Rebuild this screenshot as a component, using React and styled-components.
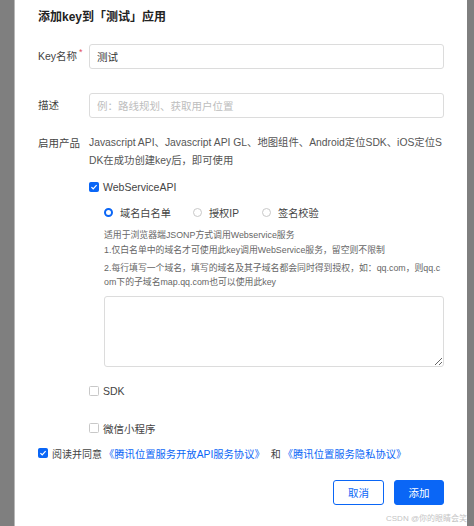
import React from 'react';
import styled, { createGlobalStyle } from 'styled-components';

const GlobalStyle = createGlobalStyle`
  html, body {
    margin: 0;
    padding: 0;
    background: #7f7f7f;
  }
  body {
    font-family: "Liberation Sans", "Noto Sans CJK SC", sans-serif;
  }
`;

const BLUE = '#0a66f6';

const Page = styled.div`
  display: flex;
  height: 526px;
  padding: 0 7px 0 14px;
  box-sizing: border-box;
`;

const Modal = styled.div`
  position: relative;
  flex: 1;
  background: #fff;
  border-left: 1px solid #b8b8b8;
  padding: 7px 23px 0 23px;
  box-sizing: border-box;
  overflow: hidden;
`;

const Title = styled.div`
  font-size: 12px;
  font-weight: bold;
  line-height: 20px;
  color: #222;
  margin-bottom: 17px;
`;

const Row = styled.div`
  display: flex;
  align-items: ${p => (p.$top ? 'flex-start' : 'center')};
  margin-top: ${p => p.$mt || 0}px;
`;

const Label = styled.div`
  width: 51px;
  flex-shrink: 0;
  font-size: 10.5px;
  color: #444;
  line-height: ${p => (p.$top ? '18px' : '25px')};
  white-space: nowrap;
`;

const Star = styled.span`
  color: #e34d59;
  font-size: 9px;
  vertical-align: top;
  margin-left: 2px;
  position: relative;
  top: -4px;
`;

const Input = styled.input`
  flex: 1;
  height: 25px;
  box-sizing: border-box;
  border: 1px solid #dcdcdc;
  border-radius: 3px;
  padding: 0 7px;
  font-family: inherit;
  font-size: 10.5px;
  color: #333;
  outline: none;
  &::placeholder {
    color: #bdbdbd;
  }
`;

const Field = styled.div`
  flex: 1;
  min-width: 0;
`;

const Desc = styled.div`
  font-size: 10.35px;
  line-height: 18px;
  color: #555;
  word-break: break-all;
`;

const CheckRow = styled.label`
  display: flex;
  align-items: center;
  height: 20px;
  gap: 4px;
  margin-top: ${p => p.$mt || 0}px;
  font-size: 10.5px;
  color: #444;
`;

const Box = styled.span`
  width: 10px;
  height: 10px;
  box-sizing: border-box;
  border-radius: 1.5px;
  border: 1px solid ${p => (p.$on ? BLUE : '#c8c8c8')};
  background: ${p => (p.$on ? BLUE : '#fff')};
  display: inline-flex;
  align-items: center;
  justify-content: center;
  flex-shrink: 0;
`;

const RadioGroup = styled.div`
  display: flex;
  align-items: center;
  height: 20px;
  margin: 5px 0 0 15px;
`;

const Radio = styled.span`
  display: flex;
  align-items: center;
  gap: 7px;
  font-size: 10.2px;
  color: #444;
  margin-right: ${p => p.$mr || 0}px;
`;

const Dot = styled.span`
  width: 9px;
  height: 9px;
  box-sizing: border-box;
  border-radius: 50%;
  border: ${p => (p.$on ? `2.6px solid ${BLUE}` : '1px solid #c8c8c8')};
  background: #fff;
  flex-shrink: 0;
`;

const Help = styled.div`
  margin: 6px 0 0 15px;
  font-size: 8.85px;
  color: #666;
  word-break: break-all;
`;

const HelpLine = styled.div`
  line-height: ${p => p.$lh || 15}px;
  margin-top: ${p => p.$mt || 0}px;
`;

const Area = styled.textarea`
  display: block;
  margin: 7px 0 0 15px;
  width: calc(100% - 15px);
  height: 71px;
  box-sizing: border-box;
  border: 1px solid #dcdcdc;
  border-radius: 3px;
  resize: vertical;
  outline: none;
  font-family: inherit;
`;

const Agree = styled.div`
  display: flex;
  align-items: center;
  height: 20px;
  margin-top: 5px;
  font-size: 10px;
  color: #444;
  white-space: nowrap;
`;

const Link = styled.a`
  color: ${BLUE};
  font-size: 10.3px;
  text-decoration: none;
  margin: 0 ${p => p.$mr || 0}px 0 ${p => p.$ml || 0}px;
`;

const Footer = styled.div`
  display: flex;
  justify-content: flex-end;
  gap: 10px;
  margin-top: 17px;
`;

const Button = styled.button`
  width: ${p => p.$w}px;
  height: 25px;
  border-radius: 3px;
  font-family: inherit;
  font-size: 10.5px;
  border: 1px solid ${BLUE};
  background: ${p => (p.$primary ? BLUE : '#fff')};
  color: ${p => (p.$primary ? '#fff' : BLUE)};
  padding: 0;
`;

const Watermark = styled.div`
  position: absolute;
  right: 0;
  bottom: 3px;
  font-size: 8px;
  color: #c4c4c4;
  white-space: nowrap;
`;

const Tick = () => (
  <svg width="8" height="8" viewBox="0 0 8 8">
    <path d="M1.4 4.1 L3.2 5.8 L6.6 2.2" fill="none" stroke="#fff" strokeWidth="1.2" />
  </svg>
);

const Check = ({ on, children, ...rest }) => (
  <CheckRow {...rest}>
    <Box $on={on}>{on && <Tick />}</Box>
    {children}
  </CheckRow>
);

export default function App() {
  return (
    <>
      <GlobalStyle />
      <Page>
        <Modal>
          <Title>添加key到「测试」应用</Title>

          <Row>
            <Label>Key名称<Star>*</Star></Label>
            <Input defaultValue="测试" />
          </Row>

          <Row $mt={24}>
            <Label>描述</Label>
            <Input placeholder="例：路线规划、获取用户位置" />
          </Row>

          <Row $top $mt={16}>
            <Label $top>启用产品</Label>
            <Field>
              <Desc>Javascript API、Javascript API GL、地图组件、Android定位SDK、iOS定位SDK在成功创建key后，即可使用</Desc>

              <Check on $mt={7}>WebServiceAPI</Check>

              <RadioGroup>
                <Radio $mr={22}><Dot $on />域名白名单</Radio>
                <Radio $mr={23}><Dot />授权IP</Radio>
                <Radio><Dot />签名校验</Radio>
              </RadioGroup>

              <Help>
                <HelpLine>适用于浏览器端JSONP方式调用Webservice服务</HelpLine>
                <HelpLine>1.仅白名单中的域名才可使用此key调用WebService服务，留空则不限制</HelpLine>
                <HelpLine $lh={14} $mt={3}>2.每行填写一个域名，填写的域名及其子域名都会同时得到授权，如：qq.com，则qq.com下的子域名map.qq.com也可以使用此key</HelpLine>
              </Help>

              <Area />

              <Check $mt={14}>SDK</Check>
              <Check $mt={17}>微信小程序</Check>
            </Field>
          </Row>

          <Agree>
            <Box $on><Tick /></Box>
            <span style={{ marginLeft: 4 }}>阅读并同意</span>
            <Link $ml={2} $mr={6}>《腾讯位置服务开放API服务协议》</Link>
            和
            <Link $ml={2}>《腾讯位置服务隐私协议》</Link>
          </Agree>

          <Footer>
            <Button $w={51}>取消</Button>
            <Button $w={50} $primary>添加</Button>
          </Footer>

          <Watermark>CSDN @你的眼睛会笑</Watermark>
        </Modal>
      </Page>
    </>
  );
}
